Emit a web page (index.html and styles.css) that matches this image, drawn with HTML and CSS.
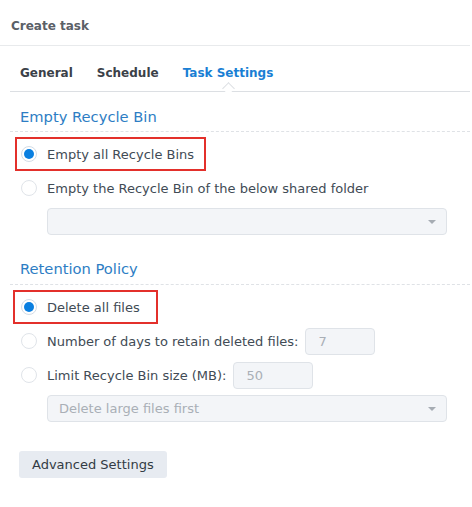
FILE: index.html
```html
<!DOCTYPE html>
<html>
<head>
<meta charset="utf-8">
<link rel="stylesheet" href="styles.css">
</head>
<body>
<div class="dialog">
  <div class="title">Create task</div>
  <div class="tabs">
    <span class="tab">General</span>
    <span class="tab">Schedule</span>
    <span class="tab active">Task Settings<span class="caret"></span></span>
  </div>

  <div class="section">
    <div class="section-title">Empty Recycle Bin</div>
    <div class="row first">
      <label class="opt hl hl-a"><span class="radio checked"></span>Empty all Recycle Bins</label>
    </div>
    <div class="row">
      <label class="opt"><span class="radio"></span>Empty the Recycle Bin of the below shared folder</label>
    </div>
    <div class="select"><span class="sel-text"></span><span class="arrow"></span></div>
  </div>

  <div class="section">
    <div class="section-title second">Retention Policy</div>
    <div class="row first">
      <label class="opt hl hl-b"><span class="radio checked"></span>Delete all files</label>
    </div>
    <div class="row">
      <label class="opt"><span class="radio"></span>Number of days to retain deleted files:</label>
      <span class="input w70">7</span>
    </div>
    <div class="row">
      <label class="opt"><span class="radio"></span>Limit Recycle Bin size (MB):</label>
      <span class="input w80">50</span>
    </div>
    <div class="select"><span class="sel-text">Delete large files first</span><span class="arrow"></span></div>
  </div>

  <div class="actions">
    <span class="btn">Advanced Settings</span>
  </div>
</div>
</body>
</html>
```

FILE: styles.css
```css
html, body {
  margin: 0;
  padding: 0;
  background: #ffffff;
}
body {
  font-family: "DejaVu Sans", Verdana, sans-serif;
  font-size: 13px;
  color: #414b55;
}
.dialog {
  width: 470px;
  height: 507px;
  position: relative;
}
.title {
  height: 46px;
  box-sizing: border-box;
  padding: 19px 0 0 11px;
  font-size: 12px;
  font-weight: bold;
  color: #5a6067;
  border-bottom: 1px solid #e8eaec;
}
.tabs {
  margin-left: 10px;
  height: 46px;
  box-sizing: border-box;
  border-bottom: 1px solid #dcdfe3;
  display: flex;
  align-items: center;
  gap: 24px;
  padding: 0 0 0 10px;
}
.tab {
  font-size: 12px;
  font-weight: bold;
  color: #3b4148;
  position: relative;
  padding-top: 8px;
}
.tab.active {
  color: #1a7fd4;
}
.caret {
  position: absolute;
  left: 50%;
  bottom: -13px;
  width: 8px;
  height: 8px;
  margin-left: -4px;
  background: #fff;
  border-left: 1px solid #dcdfe3;
  border-top: 1px solid #dcdfe3;
  transform: rotate(45deg);
}
.section {
  margin-left: 10px;
}
.section-title {
  padding: 15px 0 4px 10px;
  line-height: 20px;
  font-size: 14.7px;
  color: #2d7dc4;
  border-bottom: 1px dashed #dfe2e6;
}
.section-title.second {
  padding-top: 24px;
  padding-bottom: 5px;
}
.row {
  height: 34px;
  display: flex;
  align-items: center;
  padding-left: 11px;
  gap: 7px;
}
.row.first {
  margin-top: 5px;
}
.opt {
  display: inline-flex;
  align-items: center;
  height: 22px;
  gap: 10px;
  white-space: nowrap;
}
.hl {
  outline: 2px solid #e3302b;
  outline-offset: 4px;
}
.hl-a {
  padding-right: 6px;
}
.hl-b {
  padding-left: 2px;
  margin-left: -2px;
  padding-right: 12px;
}
.radio {
  width: 16px;
  height: 16px;
  box-sizing: border-box;
  border-radius: 50%;
  border: 1px solid #e0e4e9;
  background: #fff;
  flex: none;
  position: relative;
}
.radio.checked {
  border-color: #d3dce6;
}
.radio.checked::after {
  content: "";
  position: absolute;
  left: 2px;
  top: 2px;
  width: 10px;
  height: 10px;
  border-radius: 50%;
  background: #0a7fe0;
}
.select {
  margin: 3px 0 0 37px;
  width: 400px;
  height: 27px;
  box-sizing: border-box;
  background: #f3f5f8;
  border: 1px solid #dfe3e8;
  border-radius: 4px;
  display: flex;
  align-items: center;
  justify-content: space-between;
  padding: 0 10px 0 11px;
}
.sel-text {
  color: #a9afb6;
}
.arrow {
  width: 0;
  height: 0;
  border-left: 4px solid transparent;
  border-right: 4px solid transparent;
  border-top: 4px solid #a6acb3;
}
.input {
  height: 27px;
  box-sizing: border-box;
  background: #f3f5f8;
  border: 1px solid #dfe3e8;
  border-radius: 4px;
  display: flex;
  align-items: center;
  padding-left: 12px;
  color: #a9afb6;
}
.w70 { width: 70px; }
.w80 { width: 80px; }
.actions {
  margin-top: 29px;
  padding-left: 19px;
}
.btn {
  display: inline-flex;
  align-items: center;
  height: 27px;
  padding: 0 13px;
  background: #e7ebf1;
  border-radius: 3px;
  color: #333b44;
}
```
